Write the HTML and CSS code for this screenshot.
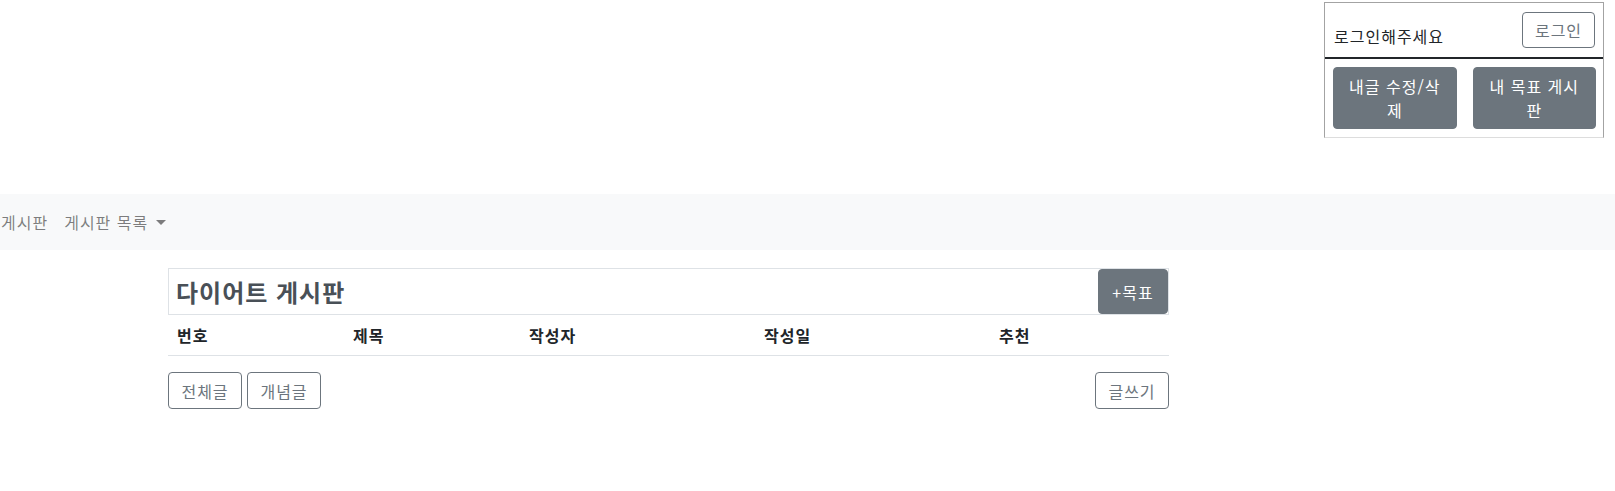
FILE: index.html
```html
<!DOCTYPE html>
<html lang="ko">
<head>
<meta charset="utf-8">
<title>다이어트 게시판</title>
<link rel="stylesheet" href="styles.css">
</head>
<body>
<header class="top">
  <div class="login-box">
    <div class="login-row">
      <span class="login-msg">로그인해주세요</span>
      <button class="btn btn-outline btn-login">로그인</button>
    </div>
    <div class="login-actions">
      <button class="btn btn-gray btn-wrap">내글 수정/삭제</button>
      <button class="btn btn-gray btn-wrap">내 목표 게시판</button>
    </div>
  </div>
</header>

<nav class="navbar">
  <a class="nav-link brand">게시판</a>
  <a class="nav-link dropdown">게시판 목록<span class="caret"></span></a>
</nav>

<main class="board">
  <div class="title-box">
    <h4 class="board-title">다이어트 게시판</h4>
    <button class="btn btn-gray btn-goal">+목표</button>
  </div>
  <div class="table-head">
    <div class="th">번호</div>
    <div class="th">제목</div>
    <div class="th">작성자</div>
    <div class="th">작성일</div>
    <div class="th">추천</div>
  </div>
  <div class="board-actions">
    <div class="filters">
      <button class="btn btn-outline btn-sm">전체글</button>
      <button class="btn btn-outline btn-sm">개념글</button>
    </div>
    <button class="btn btn-outline btn-sm">글쓰기</button>
  </div>
</main>
</body>
</html>
```

FILE: styles.css
```css
* {
  box-sizing: border-box;
}

body {
  margin: 0;
  font-family: "Noto Sans CJK KR", "Noto Sans", sans-serif;
  font-size: 16px;
  line-height: 24px;
  letter-spacing: 1px;
  color: #212529;
  background: #ffffff;
}

.btn {
  font-family: inherit;
  font-size: 16px;
  line-height: 24px;
  letter-spacing: 1px;
  border-radius: 4px;
  cursor: pointer;
  margin: 0;
}

.btn-outline {
  background: #ffffff;
  color: #6c757d;
  border: 1px solid #6c757d;
  padding: 5px 12px;
}

.btn-gray {
  background: #6c757d;
  color: #ffffff;
  border: 1px solid #6c757d;
  padding: 6px 12px;
}

/* top login area */
.top {
  height: 194px;
  display: flex;
  justify-content: flex-end;
  align-items: flex-start;
}

.login-box {
  margin-top: 2px;
  margin-right: 11px;
  width: 280px;
  border: 1px solid #a3a3a3;
  border-bottom-color: #dddddd;
}

.login-row {
  display: flex;
  justify-content: space-between;
  align-items: flex-end;
  padding: 9px 8px 9px 9px;
  border-bottom: 2px solid #212529;
}

.login-msg {
  color: #212529;
}

.btn-login {
  width: 73px;
  padding: 5px 0;
  text-align: center;
}

.login-actions {
  display: flex;
  gap: 16px;
  padding: 8px 7px 8px 8px;
}

.btn-wrap {
  flex: 1;
  text-align: center;
}

/* navbar */
.navbar {
  height: 56px;
  background: #f8f9fa;
  display: flex;
  align-items: center;
}

.nav-link {
  color: rgba(0, 0, 0, 0.5);
  padding: 8px;
  display: flex;
  align-items: center;
}

.brand {
  padding-left: 1px;
}

.caret {
  display: inline-block;
  margin-left: 8px;
  width: 0;
  height: 0;
  border-top: 5px solid rgba(0, 0, 0, 0.5);
  border-left: 5px solid transparent;
  border-right: 5px solid transparent;
}

/* board */
.board {
  margin: 18px 0 0 168px;
  width: 1001px;
}

.title-box {
  display: flex;
  align-items: stretch;
  height: 47px;
  border: 1px solid #dee2e6;
}

.board-title {
  flex: 1;
  margin: 0;
  padding-left: 7px;
  display: flex;
  align-items: center;
  font-size: 24px;
  font-weight: 700;
  color: #495057;
}

.btn-goal {
  width: 70px;
  padding: 0;
  text-align: center;
}

.table-head {
  display: grid;
  grid-template-columns: 176px 176px 235px 235px 1fr;
  border-bottom: 1px solid #dee2e6;
}

.th {
  padding: 8px 9px;
  font-weight: 700;
  color: #212529;
}

.board-actions {
  margin-top: 16px;
  display: flex;
  justify-content: space-between;
}

.filters {
  display: flex;
  gap: 5px;
}

.btn-sm {
  padding: 6px 0 5px;
  width: 74px;
  text-align: center;
}
```
